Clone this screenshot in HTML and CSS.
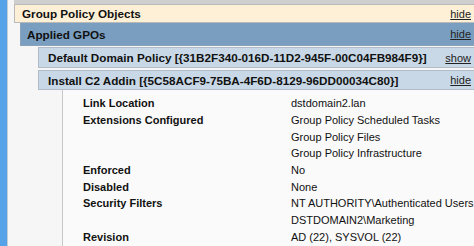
FILE: index.html
```html
<!DOCTYPE html>
<html>
<head>
<meta charset="utf-8">
<link rel="stylesheet" href="styles.css">
</head>
<body>
<div class="page">
  <div class="strip"></div>
  <div class="main">
    <div class="topline"></div>
    <div class="hdr h1"><span>Group Policy Objects</span><a>hide</a></div>
    <div class="hdr h2"><span>Applied GPOs</span><a>hide</a></div>
    <div class="hdr h3"><span>Default Domain Policy [{31B2F340-016D-11D2-945F-00C04FB984F9}]</span><a>show</a></div>
    <div class="hdr h3 h4"><span>Install C2 Addin [{5C58ACF9-75BA-4F6D-8129-96DD00034C80}]</span><a>hide</a></div>
    <div class="body">
      <div class="grid">
        <div class="k">Link Location</div><div class="v">dstdomain2.lan</div>
        <div class="k">Extensions Configured</div><div class="v">Group Policy Scheduled Tasks</div>
        <div class="k"></div><div class="v">Group Policy Files</div>
        <div class="k"></div><div class="v">Group Policy Infrastructure</div>
        <div class="k">Enforced</div><div class="v">No</div>
        <div class="k">Disabled</div><div class="v">None</div>
        <div class="k">Security Filters</div><div class="v">NT AUTHORITY\Authenticated Users</div>
        <div class="k"></div><div class="v">DSTDOMAIN2\Marketing</div>
        <div class="k">Revision</div><div class="v">AD (22), SYSVOL (22)</div>
      </div>
    </div>
  </div>
</div>
</body>
</html>
```
FILE: styles.css
```css
* { box-sizing: border-box; }
html, body { margin: 0; padding: 0; width: 474px; height: 246px; overflow: hidden; }
body {
  background: #f6f6f6;
  font-family: "Liberation Sans", Arial, sans-serif;
  font-size: 11.7px;
  color: #111;
}
.page { display: flex; height: 246px; width: 474px; overflow: hidden; }
.strip {
  width: 8px; flex: none;
  background: #56a2e8;
  border-right: 1px solid #c4ccd4;
}
.main { flex: 1; min-width: 0; display: flex; flex-direction: column; padding-left: 6px; }
.topline { height: 4px; background: #cfcfcf; flex: none; }
.hdr {
  display: flex; justify-content: space-between; align-items: center; flex: none;
  font-weight: bold; padding-right: 3px; white-space: nowrap;
  border: 1px solid #b9b9b9; border-right: none;
}
.hdr a { font-weight: normal; text-decoration: underline; color: #222; font-size: 11px; }
.h1 { background: #fdf0d6; height: 19px; padding-left: 7px; }
.h2 { background: #7a9ec0; height: 23px; padding-left: 6px; margin-left: 6px; border-top: none; border-color: #8aa3bb; }
.h3 { background: #c8d8e6; height: 21px; padding-left: 9px; margin-left: 24px; margin-top: 1px; border-color: #b0bcc8; }
.h4 { height: 20px; margin-top: 2px; }
.body {
  flex: 1; margin-left: 48px; border-left: 1px solid #c8c8c8; background: #fafafa;
  padding: 5px 0 0 20px;
}
.grid {
  display: grid; grid-template-columns: 208px 183px;
  grid-auto-rows: 16.7px; align-items: center;
  font-size: 11px;
}
.k { font-weight: bold; white-space: nowrap; }
.v { white-space: nowrap; }
```
